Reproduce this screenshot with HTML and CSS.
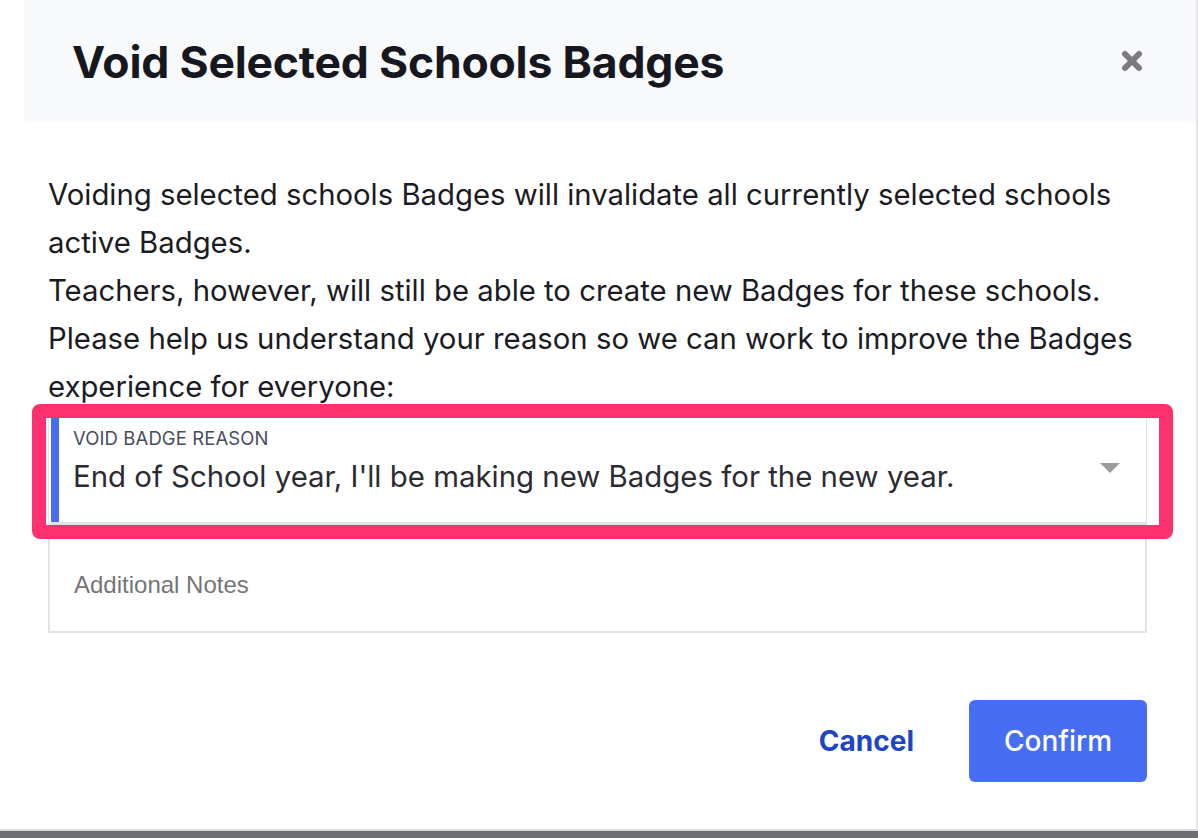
FILE: index.html
```html
<!DOCTYPE html>
<html>
	<head>
		<meta charset="utf-8">
		<title>Void Selected Schools Badges</title>
		<link rel="stylesheet" href="styles.css">
	</head>
	<body>
		<div class="modal">
			<div class="modalheader">
				<h1 class="modaltitle">Void Selected Schools Badges</h1>
				<button class="closebutton" aria-label="Close">
					<svg width="22" height="22" viewBox="0 0 22 22">
						<path d="M4 4 L18 18 M18 4 L4 18" stroke="#7b7b7e" stroke-width="6" stroke-linecap="round"/>
					</svg>
				</button>
			</div>
			<div class="modalbody">
				<p class="intro">Voiding selected schools Badges will invalidate all currently selected schools active Badges.<br>
				Teachers, however, will still be able to create new Badges for these schools.<br>
				Please help us understand your reason so we can work to improve the Badges experience for everyone:</p>

				<div class="selectfield">
					<div class="selectinner">
						<div class="selecttext">
							<span class="selectlabel">VOID BADGE REASON</span>
							<span class="selectvalue">End of School year, I'll be making new Badges for the new year.</span>
						</div>
						<span class="selectarrow"></span>
					</div>
				</div>

				<div class="notesfield">
					<span class="notesplaceholder">Additional Notes</span>
				</div>

				<div class="buttonrow">
					<button class="cancelbutton">Cancel</button>
					<button class="confirmbutton">Confirm</button>
				</div>
			</div>
			<!-- annotation box drawn over the reason field -->
			<div class="highlight"></div>
		</div>
	</body>
</html>
```

FILE: styles.css
```css
body {
	margin: 0px;
	background-color: #6d6d72;
	font-family: "Inter", "Lato", sans-serif;
	color: #1b1b24;
}
.modal {
	position: relative;
	width: 1196px;
	height: 829px;
	background-color: white;
	border-right: 2px solid #e4e4e9;
	border-bottom: 2px solid #dcdce0;
}
.modalheader {
	margin-left: 24px;
	height: 122px;
	background-color: #f8f9fb;
	display: flex;
	align-items: center;
	justify-content: space-between;
	padding: 0 53px 0 48px;
}
.modaltitle {
	margin: 0;
	font-size: 44.5px;
	font-weight: 700;
	letter-spacing: -0.2px;
	color: #17171f;
	padding-top: 2px;
}
.closebutton {
	border: none;
	background: none;
	padding: 0;
	width: 22px;
	height: 22px;
	display: flex;
}
.modalbody {
	padding: 0 49px 0 48px;
}
.intro {
	margin: 0;
	padding-top: 49px;
	font-size: 29.3px;
	line-height: 48px;
	color: #1b1b24;
}
.selectfield {
	margin-top: 5px;
	height: 105px;
	border: 1px solid #e2e3e7;
	border-bottom: 4px solid #e2e3e7;
	padding-left: 2px;
	background-color: white;
}
.selectinner {
	height: 100%;
	border-left: 8px solid #4a6cf5;
	display: flex;
	align-items: center;
	justify-content: space-between;
	padding: 0 26px 0 14px;
}
.selecttext {
	display: flex;
	flex-direction: column;
	padding-bottom: 18px;
}
.selectlabel {
	font-size: 18.5px;
	color: #474d5e;
	letter-spacing: 0.1px;
}
.selectvalue {
	font-size: 29.4px;
	color: #2b2b31;
	margin-top: 10px;
}
.selectarrow {
	width: 0;
	height: 0;
	border-left: 10px solid transparent;
	border-right: 10px solid transparent;
	border-top: 10px solid #9b9b9b;
	margin-bottom: 4px;
}
.notesfield {
	height: 105px;
	border: 2px solid #e2e3e7;
	border-top: none;
	display: flex;
	align-items: center;
	padding-left: 24px;
}
.notesplaceholder {
	font-family: "Liberation Sans", Arial, sans-serif;
	font-size: 24px;
	color: #757575;
	padding-top: 12px;
}
.buttonrow {
	display: flex;
	justify-content: flex-end;
	align-items: center;
	margin-top: 67px;
}
.cancelbutton {
	border: none;
	background: none;
	font-family: "Inter", "Lato", sans-serif;
	font-size: 28px;
	font-weight: 700;
	color: #2045c4;
	margin-right: 55px;
	padding: 0;
}
.confirmbutton {
	width: 178px;
	height: 82px;
	border: none;
	border-radius: 6px;
	background-color: #476ef2;
	color: white;
	font-family: "Inter", "Lato", sans-serif;
	font-size: 28px;
	font-weight: 500;
}
.highlight {
	position: absolute;
	left: 32px;
	top: 404px;
	width: 1113px;
	height: 107px;
	border: 14px solid #ff3070;
	border-radius: 8px;
}
```
